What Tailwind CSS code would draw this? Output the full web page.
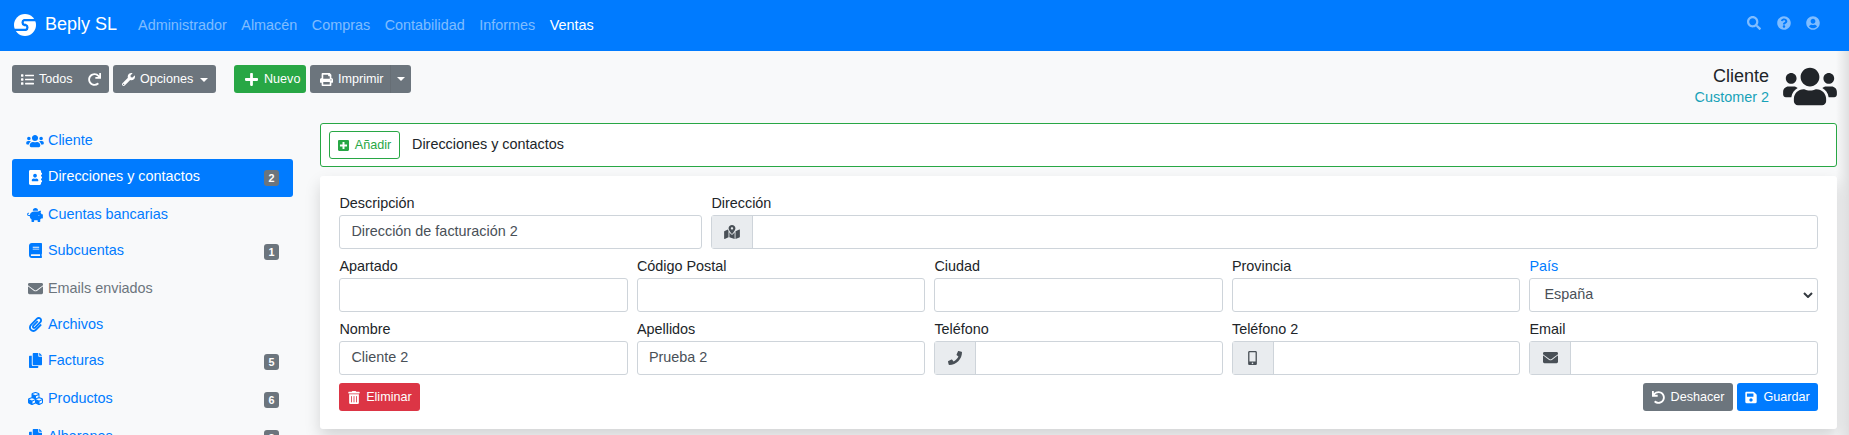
<!DOCTYPE html>
<html lang="es">
<head>
    <meta charset="UTF-8">
    <title>Cliente - Beply SL</title>
    <script src="https://cdn.jsdelivr.net/npm/@tailwindcss/browser@4"></script>
</head>
<body class="relative bg-[#f8f9fa] text-[#212529] font-['Liberation_Sans',Arial,sans-serif] text-[14.4px] leading-[21.6px] h-[435px] overflow-hidden">

    <!-- Barra superior -->
    <nav class="h-[51px] bg-[#007bff] flex items-center pl-[14px] pr-[29px]">
        <svg viewBox="0 0 24 24" class="w-[22px] h-[22px] mr-[9px] -mt-[2px]">
            <circle cx="12" cy="12" r="12" fill="#fff"/>
            <path d="M24 6.6H11.2a2.9 2.9 0 0 0 0 5.4h1.6a2.9 2.9 0 0 1 0 5.4H0" fill="none" stroke="#007bff" stroke-width="2.5"/>
        </svg>
        <span class="text-[18px] text-white mr-[21px] -mt-[2px]">Beply SL</span>
        <div class="flex gap-[14.5px] text-white/50">
            <a>Administrador</a>
            <a>Almacén</a>
            <a>Compras</a>
            <a>Contabilidad</a>
            <a>Informes</a>
            <a class="text-white">Ventas</a>
        </div>
        <div class="ml-auto flex items-center gap-[15.5px] fill-white/50 mb-[5px]">
            <svg viewBox="0 0 512 512" class="w-[14px] h-[14px]"><path d="M505 442.7L405.3 343c-4.5-4.5-10.6-7-17-7H372c27.6-35.3 44-79.7 44-128C416 93.1 322.9 0 208 0S0 93.1 0 208s93.1 208 208 208c48.3 0 92.7-16.4 128-44v16.3c0 6.4 2.5 12.5 7 17l99.7 99.7c9.4 9.4 24.6 9.4 33.9 0l28.3-28.3c9.4-9.4 9.4-24.6.1-34zM208 336c-70.7 0-128-57.2-128-128 0-70.7 57.2-128 128-128 70.7 0 128 57.2 128 128 0 70.7-57.2 128-128 128z"/></svg>
            <svg viewBox="0 0 512 512" class="w-[14px] h-[14px]"><path d="M504 256c0 136.997-111.043 248-248 248S8 392.997 8 256C8 119.083 119.043 8 256 8s248 111.083 248 248zM262.655 90c-54.497 0-89.255 22.957-116.549 63.758-3.536 5.286-2.353 12.415 2.715 16.258l34.699 26.31c5.205 3.947 12.621 3.008 16.665-2.122 17.864-22.658 30.113-35.797 57.303-35.797 20.429 0 45.698 13.148 45.698 32.958 0 14.976-12.363 22.667-32.534 33.976C247.128 238.528 216 254.941 216 296v4c0 6.627 5.373 12 12 12h56c6.627 0 12-5.373 12-12v-1.333c0-28.462 83.186-29.647 83.186-106.667 0-58.002-60.165-102-116.531-102zM256 338c-25.365 0-46 20.635-46 46 0 25.364 20.635 46 46 46s46-20.636 46-46c0-25.365-20.635-46-46-46z"/></svg>
            <svg viewBox="0 0 496 512" class="w-[14px] h-[14px]"><path d="M248 8C111 8 0 119 0 256s111 248 248 248 248-111 248-248S385 8 248 8zm0 96c48.6 0 88 39.4 88 88s-39.4 88-88 88-88-39.4-88-88 39.4-88 88-88zm0 344c-58.7 0-111.3-26.6-146.5-68.2 18.8-35.4 55.6-59.8 98.5-59.8 2.4 0 4.8.4 7.1 1.1 13 4.2 26.6 6.9 40.9 6.9 14.3 0 28-2.7 40.9-6.9 2.3-.7 4.7-1.1 7.1-1.1 42.9 0 79.7 24.4 98.5 59.8C359.3 421.4 306.7 448 248 448z"/></svg>
        </div>
    </nav>

    <!-- Barra de acciones -->
    <div class="h-[72px] flex items-start pl-[12px] pr-[12px] pt-[14px] text-[12.6px] text-white">
        <div class="flex h-[28px] w-[97px] items-center justify-between pl-[9px] pr-[8px] pt-[1px] bg-[#6c757d] rounded-[3px] mr-[4px]">
            <span class="flex items-center gap-[5px]">
                <svg viewBox="0 0 512 512" class="w-[13px] h-[13px] fill-white"><path d="M80 368H16a16 16 0 0 0-16 16v64a16 16 0 0 0 16 16h64a16 16 0 0 0 16-16v-64a16 16 0 0 0-16-16zm0-320H16A16 16 0 0 0 0 64v64a16 16 0 0 0 16 16h64a16 16 0 0 0 16-16V64a16 16 0 0 0-16-16zm0 160H16a16 16 0 0 0-16 16v64a16 16 0 0 0 16 16h64a16 16 0 0 0 16-16v-64a16 16 0 0 0-16-16zm416 176H176a16 16 0 0 0-16 16v32a16 16 0 0 0 16 16h320a16 16 0 0 0 16-16v-32a16 16 0 0 0-16-16zm0-320H176a16 16 0 0 0-16 16v32a16 16 0 0 0 16 16h320a16 16 0 0 0 16-16V80a16 16 0 0 0-16-16zm0 160H176a16 16 0 0 0-16 16v32a16 16 0 0 0 16 16h320a16 16 0 0 0 16-16v-32a16 16 0 0 0-16-16z"/></svg>
                Todos
            </span>
            <svg viewBox="0 0 512 512" class="w-[13px] h-[13px] fill-white"><path d="M500.33 0h-47.41a12 12 0 0 0-12 12.57l4 82.76A247.42 247.42 0 0 0 256 8C119.34 8 7.9 119.53 8 256.19 8.1 393.07 119.1 504 256 504a247.1 247.1 0 0 0 166.18-63.91 12 12 0 0 0 .48-17.43l-34-34a12 12 0 0 0-16.38-.55A176 176 0 1 1 402.1 157.8l-101.53-4.87a12 12 0 0 0-12.57 12v47.41a12 12 0 0 0 12 12h200.33a12 12 0 0 0 12-12V12a12 12 0 0 0-12-12z"/></svg>
        </div>
        <div class="flex h-[28px] w-[103px] items-center gap-[5px] pl-[9px] pr-[8px] pt-[1px] bg-[#6c757d] rounded-[3px] mr-[18px]">
            <svg viewBox="0 0 512 512" class="w-[13px] h-[13px] fill-white"><path d="M507.73 109.1c-2.24-9.03-13.54-12.09-20.12-5.51l-74.36 74.36-67.88-11.31-11.31-67.88 74.36-74.36c6.62-6.62 3.43-17.9-5.66-20.16-47.38-11.74-99.55.91-136.58 37.93-39.64 39.64-50.55 97.1-34.05 147.2L18.74 402.76c-24.99 24.99-24.99 65.51 0 90.5 24.99 24.99 65.51 24.99 90.5 0l213.21-213.21c50.12 16.71 107.47 5.68 147.37-34.22 37.07-37.07 49.7-89.32 37.91-136.73zM64 472c-13.25 0-24-10.75-24-24 0-13.26 10.75-24 24-24s24 10.74 24 24c0 13.25-10.75 24-24 24z"/></svg>
            Opciones
            <span class="ml-auto border-x-[4px] border-t-[4px] border-x-transparent border-t-white"></span>
        </div>
        <div class="flex h-[28px] w-[72px] items-center gap-[6px] pl-[11px] pt-[1px] bg-[#28a745] rounded-[3px] mr-[4px]">
            <svg viewBox="0 0 448 512" class="w-[13px] h-[15px] fill-white"><path d="M416 208H272V64c0-17.67-14.33-32-32-32h-32c-17.67 0-32 14.33-32 32v144H32c-17.67 0-32 14.33-32 32v32c0 17.67 14.33 32 32 32h144v144c0 17.67 14.33 32 32 32h32c17.67 0 32-14.33 32-32V304h144c17.67 0 32-14.33 32-32v-32c0-17.67-14.33-32-32-32z"/></svg>
            Nuevo
        </div>
        <div class="flex h-[28px] w-[101px] items-center bg-[#6c757d] rounded-[3px]">
            <div class="flex flex-1 h-full items-center gap-[5px] pl-[10px] pt-[1px] border-r border-[#666e75]">
                <svg viewBox="0 0 512 512" class="w-[13px] h-[13px] fill-white"><path d="M448 192V77.25c0-8.49-3.37-16.62-9.37-22.63L393.37 9.37c-6-6-14.14-9.37-22.63-9.37H96C78.33 0 64 14.33 64 32v160c-35.35 0-64 28.65-64 64v112c0 8.84 7.16 16 16 16h48v96c0 17.67 14.33 32 32 32h320c17.67 0 32-14.33 32-32v-96h48c8.84 0 16-7.16 16-16V256c0-35.35-28.65-64-64-64zm-64 256H128v-96h256v96zm0-224H128V64h192v48c0 8.84 7.16 16 16 16h48v96zm48 72c-13.25 0-24-10.75-24-24 0-13.26 10.75-24 24-24s24 10.74 24 24c0 13.25-10.75 24-24 24z"/></svg>
                Imprimir
            </div>
            <div class="w-[20px] flex justify-center">
                <span class="border-x-[4px] border-t-[4px] border-x-transparent border-t-white"></span>
            </div>
        </div>
        <div class="ml-auto flex items-start">
            <div class="text-right mr-[14px] pt-[1px]">
                <div class="text-[18px] leading-[21px] text-[#212529]">Cliente</div>
                <div class="text-[14.4px] leading-[21.6px] text-[#17a2b8]">Customer 2</div>
            </div>
            <svg viewBox="0 0 640 512" class="w-[54px] h-[43px] fill-[#212529]"><path d="M96 224c35.3 0 64-28.7 64-64s-28.7-64-64-64-64 28.7-64 64 28.7 64 64 64zm448 0c35.3 0 64-28.7 64-64s-28.7-64-64-64-64 28.7-64 64 28.7 64 64 64zm32 32h-64c-17.6 0-33.5 7.1-45.1 18.6 40.3 22.1 68.9 62 75.1 109.4h66c17.7 0 32-14.3 32-32v-32c0-35.3-28.7-64-64-64zm-256 0c61.9 0 112-50.1 112-112S381.9 32 320 32 208 82.1 208 144s50.1 112 112 112zm76.8 32h-8.3c-20.8 10-43.9 16-68.5 16s-47.6-6-68.5-16h-8.3C179.6 288 128 339.6 128 403.2V432c0 26.5 21.5 48 48 48h288c26.5 0 48-21.5 48-48v-28.8c0-63.6-51.6-115.2-115.2-115.2zm-223.7-13.4C161.5 263.1 145.6 256 128 256H64c-35.3 0-64 28.7-64 64v32c0 17.7 14.3 32 32 32h65.9c6.3-47.4 34.9-87.3 75.2-109.4z"/></svg>
        </div>
    </div>

    <div class="flex pl-[12px] pr-[12px] h-[312px] overflow-hidden">
        <!-- Menú lateral -->
        <aside class="w-[281px] shrink-0 mr-[27px] text-[#007bff] fill-[#007bff]">
            <a class="flex items-center h-[36px] pl-[14px] pr-[14px] gap-[4px]">
                <svg viewBox="0 0 640 512" class="w-[18px] h-[14px]"><path d="M96 224c35.3 0 64-28.7 64-64s-28.7-64-64-64-64 28.7-64 64 28.7 64 64 64zm448 0c35.3 0 64-28.7 64-64s-28.7-64-64-64-64 28.7-64 64 28.7 64 64 64zm32 32h-64c-17.6 0-33.5 7.1-45.1 18.6 40.3 22.1 68.9 62 75.1 109.4h66c17.7 0 32-14.3 32-32v-32c0-35.3-28.7-64-64-64zm-256 0c61.9 0 112-50.1 112-112S381.9 32 320 32 208 82.1 208 144s50.1 112 112 112zm76.8 32h-8.3c-20.8 10-43.9 16-68.5 16s-47.6-6-68.5-16h-8.3C179.6 288 128 339.6 128 403.2V432c0 26.5 21.5 48 48 48h288c26.5 0 48-21.5 48-48v-28.8c0-63.6-51.6-115.2-115.2-115.2zm-223.7-13.4C161.5 263.1 145.6 256 128 256H64c-35.3 0-64 28.7-64 64v32c0 17.7 14.3 32 32 32h65.9c6.3-47.4 34.9-87.3 75.2-109.4z"/></svg>
                Cliente
            </a>
            <a class="flex items-center h-[38px] pl-[14px] pr-[14px] gap-[4px] bg-[#007bff] text-white fill-white rounded-[3px]">
                <span class="w-[18px] flex justify-center -mt-[2px]"><svg viewBox="0 0 448 512" class="w-[13px] h-[15px]"><path d="M436 160c6.6 0 12-5.4 12-12v-40c0-6.6-5.4-12-12-12h-20V48c0-26.5-21.5-48-48-48H48C21.5 0 0 21.5 0 48v416c0 26.5 21.5 48 48 48h320c26.5 0 48-21.5 48-48v-48h20c6.6 0 12-5.4 12-12v-40c0-6.6-5.4-12-12-12h-20v-64h20c6.6 0 12-5.4 12-12v-40c0-6.6-5.4-12-12-12h-20v-64h20zm-228-32c35.3 0 64 28.7 64 64s-28.7 64-64 64-64-28.7-64-64 28.7-64 64-64zm112 236.8c0 10.6-10 19.2-22.4 19.2H118.4C106 384 96 375.4 96 364.8v-19.2c0-31.8 30.1-57.6 67.2-57.6h5c12.3 5.1 25.7 8 39.8 8s27.6-2.9 39.8-8h5c37.1 0 67.2 25.8 67.2 57.6v19.2z"/></svg></span>
                <span class="-mt-[2px]">Direcciones y contactos</span>
                <span class="ml-auto w-[15px] h-[16px] rounded-[3px] bg-[#6c757d] text-white text-[10.8px] leading-[16px] font-bold text-center">2</span>
            </a>
            <a class="flex items-center h-[35.6px] pl-[14px] pr-[14px] gap-[4px]">
                <span class="w-[18px] flex justify-center"><svg viewBox="0 0 576 512" class="w-[16px] h-[14px]"><path d="M560 224h-29.5c-8.8-20-21.6-37.7-37.4-52.5L512 96h-32c-29.4 0-55.4 13.5-73 34.3-7.6-1.1-15.1-2.3-23-2.3H256c-77.4 0-141.9 55-156.8 128H56c-14.8 0-26.5-13.5-23.5-28.8C34.7 215.8 45.4 208 57 208h1c3.3 0 6-2.7 6-6v-20c0-3.3-2.7-6-6-6-28.5 0-53.9 20.4-57.5 48.6C-3.9 258.8 22.7 288 56 288h40c0 52.2 25.4 98.1 64 127.3V496c0 8.8 7.2 16 16 16h64c8.8 0 16-7.2 16-16v-48h128v48c0 8.8 7.2 16 16 16h64c8.8 0 16-7.2 16-16v-80.9c11.8-8.9 22.3-19.4 31.3-31.1H560c8.8 0 16-7.2 16-16V240c0-8.8-7.2-16-16-16zm-128 64c-8.8 0-16-7.2-16-16s7.2-16 16-16 16 7.2 16 16-7.2 16-16 16zM256 96h128c5.4 0 10.7.4 15.9.8 0-.3.1-.5.1-.8 0-53-43-96-96-96s-96 43-96 96c0 2.1.5 4.1.6 6.2 15.2-3.9 31-6.2 47.4-6.2z"/></svg></span>
                Cuentas bancarias
            </a>
            <a class="flex items-center h-[38px] pl-[14px] pr-[14px] gap-[4px]">
                <span class="w-[18px] flex justify-center -mt-[2px]"><svg viewBox="0 0 448 512" class="w-[13px] h-[15px]"><path d="M448 360V24c0-13.3-10.7-24-24-24H96C43 0 0 43 0 96v320c0 53 43 96 96 96h328c13.3 0 24-10.7 24-24v-16c0-7.5-3.5-14.3-8.9-18.7-4.2-15.4-4.2-59.3 0-74.7 5.4-4.3 8.9-11.1 8.9-18.6zM128 134c0-3.3 2.7-6 6-6h212c3.3 0 6 2.7 6 6v20c0 3.3-2.7 6-6 6H134c-3.3 0-6-2.7-6-6v-20zm0 64c0-3.3 2.7-6 6-6h212c3.3 0 6 2.7 6 6v20c0 3.3-2.7 6-6 6H134c-3.3 0-6-2.7-6-6v-20zm253.4 250H96c-17.7 0-32-14.3-32-32 0-17.6 14.4-32 32-32h285.4c-1.9 17.1-1.9 46.9 0 64z"/></svg></span>
                <span class="-mt-[2px]">Subcuentas</span>
                <span class="ml-auto w-[15px] h-[16px] rounded-[3px] bg-[#6c757d] text-white text-[10.8px] leading-[16px] font-bold text-center">1</span>
            </a>
            <a class="flex items-center h-[36px] pl-[14px] pr-[14px] gap-[4px] text-[#6c757d] fill-[#6c757d]">
                <svg viewBox="0 0 512 512" class="w-[15px] h-[15px] mx-[1.5px]"><path d="M502.3 190.8c3.9-3.1 9.7-.2 9.7 4.7V400c0 26.5-21.5 48-48 48H48c-26.5 0-48-21.5-48-48V195.6c0-5 5.7-7.8 9.7-4.7 22.4 17.4 52.1 39.5 154.1 113.6 21.1 15.4 56.7 47.8 92.2 47.6 35.7.3 72-32.8 92.3-47.6 102-74.1 131.6-96.3 154-113.7zM256 320c23.2.4 56.6-29.2 73.4-41.4 132.7-96.3 142.8-104.7 173.4-128.7 5.8-4.5 9.2-11.5 9.2-18.9v-19c0-26.5-21.5-48-48-48H48C21.5 64 0 85.5 0 112v19c0 7.4 3.4 14.3 9.2 18.9 30.6 23.9 40.7 32.4 173.4 128.7 16.8 12.2 50.2 41.8 73.4 41.4z"/></svg>
                Emails enviados
            </a>
            <a class="flex items-center h-[36px] pl-[14px] pr-[14px] gap-[4px]">
                <span class="w-[18px] flex justify-center"><svg viewBox="0 0 448 512" class="w-[13px] h-[15px]"><path d="M43.246 466.142c-58.43-60.289-57.341-157.511 1.386-217.581L254.392 34c44.316-45.332 116.351-45.336 160.671 0 43.89 44.894 43.943 117.329 0 162.276L232.214 383.128c-29.855 30.537-78.633 30.111-107.982-.998-28.275-29.97-27.368-77.473 1.452-106.953l143.743-146.835c6.182-6.314 16.312-6.422 22.626-.241l22.861 22.379c6.315 6.182 6.422 16.312.241 22.626L171.427 319.927c-4.932 5.045-5.236 13.428-.648 18.292 4.372 4.634 11.245 4.711 15.688.165l182.849-186.851c19.613-20.062 19.613-52.725-.011-72.798-19.189-19.627-49.957-19.637-69.154 0L90.39 293.295c-34.763 35.56-35.299 93.12-1.191 128.313 34.01 35.093 88.985 35.137 123.058.286l172.06-175.999c6.177-6.319 16.307-6.433 22.626-.256l22.877 22.364c6.319 6.177 6.434 16.307.256 22.626l-172.06 175.998c-59.576 60.938-155.943 60.216-214.77-.485z"/></svg></span>
                Archivos
            </a>
            <a class="flex items-center h-[38px] pl-[14px] pr-[14px] gap-[4px]">
                <span class="w-[18px] flex justify-center -mt-[2px]"><svg viewBox="0 0 448 512" class="w-[13px] h-[15px]"><path d="M320 448v40c0 13.255-10.745 24-24 24H24c-13.255 0-24-10.745-24-24V120c0-13.255 10.745-24 24-24h72v296c0 30.879 25.121 56 56 56h168zm0-344V0H152c-13.255 0-24 10.745-24 24v368c0 13.255 10.745 24 24 24h272c13.255 0 24-10.745 24-24V128H344c-13.2 0-24-10.8-24-24zm120.971-31.029L375.029 7.029A24 24 0 0 0 358.059 0H352v96h96v-6.059a24 24 0 0 0-7.029-16.97z"/></svg></span>
                <span class="-mt-[2px]">Facturas</span>
                <span class="ml-auto w-[15px] h-[16px] rounded-[3px] bg-[#6c757d] text-white text-[10.8px] leading-[16px] font-bold text-center">5</span>
            </a>
            <a class="flex items-center h-[38px] pl-[14px] pr-[14px] gap-[4px]">
                <span class="w-[18px] flex justify-center -mt-[2px]"><svg viewBox="0 0 512 512" class="w-[15px] h-[15px]"><path d="M488.6 250.2L392 214V105.5c0-15-9.3-28.4-23.4-33.7l-100-37.5c-8.1-3.1-17.1-3.1-25.3 0l-100 37.5c-14.1 5.3-23.4 18.7-23.4 33.7V214l-96.6 36.2C9.3 255.5 0 268.9 0 283.9V394c0 13.6 7.7 26.1 19.9 32.2l100 50c10.1 5.1 22.1 5.1 32.2 0l103.9-52 103.9 52c10.1 5.1 22.1 5.1 32.2 0l100-50c12.2-6.1 19.9-18.6 19.9-32.2V283.9c0-15-9.3-28.4-23.4-33.7zM358 214.8l-85 31.9v-68.2l85-37v73.3zM154 104.1l102-38.2 102 38.2v.6l-102 41.4-102-41.4v-.6zm84 291.1l-85 42.5v-79.1l85-38.8v75.4zm0-112l-102 41.4-102-41.4v-.6l102-38.2 102 38.2v.6zm240 112l-85 42.5v-79.1l85-38.8v75.4zm0-112l-102 41.4-102-41.4v-.6l102-38.2 102 38.2v.6z"/></svg></span>
                <span class="-mt-[2px]">Productos</span>
                <span class="ml-auto w-[15px] h-[16px] rounded-[3px] bg-[#6c757d] text-white text-[10.8px] leading-[16px] font-bold text-center">6</span>
            </a>
            <a class="flex items-center h-[38px] pl-[14px] pr-[14px] gap-[4px]">
                <span class="w-[18px] flex justify-center -mt-[2px]"><svg viewBox="0 0 448 512" class="w-[13px] h-[15px]"><path d="M320 448v40c0 13.255-10.745 24-24 24H24c-13.255 0-24-10.745-24-24V120c0-13.255 10.745-24 24-24h72v296c0 30.879 25.121 56 56 56h168zm0-344V0H152c-13.255 0-24 10.745-24 24v368c0 13.255 10.745 24 24 24h272c13.255 0 24-10.745 24-24V128H344c-13.2 0-24-10.8-24-24zm120.971-31.029L375.029 7.029A24 24 0 0 0 358.059 0H352v96h96v-6.059a24 24 0 0 0-7.029-16.97z"/></svg></span>
                <span class="-mt-[2px]">Albaranes</span>
                <span class="ml-auto w-[15px] h-[16px] rounded-[3px] bg-[#6c757d] text-white text-[10.8px] leading-[16px] font-bold text-center">3</span>
            </a>
        </aside>

        <!-- Contenido -->
        <main class="w-[1517px] shrink-0">
            <div class="h-[44px] flex items-center bg-white border border-[#28a745] rounded-[3px] pl-[8px] mb-[9px]">
                <div class="flex items-center h-[28px] w-[71px] justify-center gap-[6px] pt-[1px] border border-[#28a745] rounded-[3px] text-[#28a745] text-[12.6px] mr-[12px]">
                    <svg viewBox="0 0 448 512" class="w-[11px] h-[13px] fill-[#28a745]"><path d="M400 32H48C21.5 32 0 53.5 0 80v352c0 26.5 21.5 48 48 48h352c26.5 0 48-21.5 48-48V80c0-26.5-21.5-48-48-48zm-32 252c0 6.6-5.4 12-12 12h-92v92c0 6.6-5.4 12-12 12h-56c-6.6 0-12-5.4-12-12v-92H92c-6.6 0-12-5.4-12-12v-56c0-6.6 5.4-12 12-12h92v-92c0-6.6 5.4-12 12-12h56c6.6 0 12 5.4 12 12v92h92c6.6 0 12 5.4 12 12v56z"/></svg>
                    Añadir
                </div>
                <span>Direcciones y contactos</span>
            </div>

            <form class="bg-white rounded-[3px] shadow-[0_8px_16px_rgba(0,0,0,0.15)] pt-[17.4px] pl-[19.4px] pr-[19px] h-[253px]">
                <div class="grid grid-cols-[363px_1fr] gap-x-[9px] mb-[7.4px]">
                    <label>Descripción
                        <div class="h-[34px] flex items-center px-[11px] border border-[#ced4da] rounded-[3px] text-[#495057]">Dirección de facturación 2</div>
                    </label>
                    <label>Dirección
                        <div class="h-[34px] flex border border-[#ced4da] rounded-[3px]">
                            <span class="w-[41px] flex items-center justify-center bg-[#e9ecef] border-r border-[#ced4da] fill-[#495057]">
                                <svg viewBox="0 0 576 512" class="w-[16px] h-[14px]"><path d="M288 0c-69.59 0-126 56.41-126 126 0 56.26 82.35 158.8 113.9 196.02 6.39 7.54 17.82 7.54 24.2 0C331.65 284.8 414 182.26 414 126 414 56.41 357.59 0 288 0zm0 168c-23.2 0-42-18.8-42-42s18.8-42 42-42 42 18.8 42 42-18.8 42-42 42zM20.12 215.95A32.006 32.006 0 0 0 0 245.66v250.32c0 11.32 11.43 19.06 21.94 14.86L160 448V214.92c-8.84-15.98-16.07-31.54-21.25-46.42L20.12 215.95zM288 359.67c-14.07 0-27.38-6.18-36.51-16.96-19.66-23.2-40.57-49.62-59.49-76.72V448l192 64V266c-18.92 27.09-39.82 53.52-59.49 76.72-9.13 10.77-22.44 16.95-36.51 16.95zm266.06-198.51L416 224v288l139.88-55.95A31.996 31.996 0 0 0 576 426.34V176.02c0-11.32-11.43-19.06-21.94-14.86z"/></svg>
                            </span>
                        </div>
                    </label>
                </div>

                <div class="grid grid-cols-5 gap-x-[9px] mb-[7.4px]">
                    <label>Apartado<div class="h-[34px] border border-[#ced4da] rounded-[3px]"></div></label>
                    <label>Código Postal<div class="h-[34px] border border-[#ced4da] rounded-[3px]"></div></label>
                    <label>Ciudad<div class="h-[34px] border border-[#ced4da] rounded-[3px]"></div></label>
                    <label>Provincia<div class="h-[34px] border border-[#ced4da] rounded-[3px]"></div></label>
                    <label class="text-[#007bff]">País
                        <div class="h-[34px] flex items-center justify-between pl-[14px] pr-[4px] border border-[#ced4da] rounded-[3px] text-[#495057]">
                            España
                            <svg viewBox="0 0 10 6" class="w-[10px] h-[6px]"><path d="M1 1l4 4 4-4" fill="none" stroke="#343a40" stroke-width="2"/></svg>
                        </div>
                    </label>
                </div>

                <div class="grid grid-cols-5 gap-x-[9px] mb-[8px]">
                    <label>Nombre
                        <div class="h-[34px] flex items-center px-[11px] border border-[#ced4da] rounded-[3px] text-[#495057]">Cliente 2</div>
                    </label>
                    <label>Apellidos
                        <div class="h-[34px] flex items-center px-[11px] border border-[#ced4da] rounded-[3px] text-[#495057]">Prueba 2</div>
                    </label>
                    <label>Teléfono
                        <div class="h-[34px] flex border border-[#ced4da] rounded-[3px]">
                            <span class="w-[41px] flex items-center justify-center bg-[#e9ecef] border-r border-[#ced4da] fill-[#495057]">
                                <svg viewBox="0 0 512 512" class="w-[14px] h-[14px]"><path d="M493.4 24.6l-104-24c-11.3-2.6-22.9 3.3-27.5 13.9l-48 112c-4.2 9.8-1.4 21.3 6.9 28l60.6 49.6c-36 76.7-98.9 140.5-177.2 177.2l-49.6-60.6c-6.8-8.3-18.2-11.1-28-6.9l-112 48C3.9 366.5-2 378.1.6 389.4l24 104C27.1 504.2 36.7 512 48 512c256.1 0 464-207.5 464-464 0-11.2-7.7-20.9-18.6-23.4z"/></svg>
                            </span>
                        </div>
                    </label>
                    <label>Teléfono 2
                        <div class="h-[34px] flex border border-[#ced4da] rounded-[3px]">
                            <span class="w-[41px] flex items-center justify-center bg-[#e9ecef] border-r border-[#ced4da] fill-[#495057]">
                                <svg viewBox="0 0 320 512" class="w-[9px] h-[14px]"><path d="M272 0H48C21.5 0 0 21.5 0 48v416c0 26.5 21.5 48 48 48h224c26.5 0 48-21.5 48-48V48c0-26.5-21.5-48-48-48zM160 480c-17.7 0-32-14.3-32-32s14.3-32 32-32 32 14.3 32 32-14.3 32-32 32zm112-108c0 6.6-5.4 12-12 12H60c-6.6 0-12-5.4-12-12V60c0-6.6 5.4-12 12-12h200c6.6 0 12 5.4 12 12v312z"/></svg>
                            </span>
                        </div>
                    </label>
                    <label>Email
                        <div class="h-[34px] flex border border-[#ced4da] rounded-[3px]">
                            <span class="w-[41px] flex items-center justify-center bg-[#e9ecef] border-r border-[#ced4da] fill-[#495057]">
                                <svg viewBox="0 0 512 512" class="w-[15px] h-[15px]"><path d="M502.3 190.8c3.9-3.1 9.7-.2 9.7 4.7V400c0 26.5-21.5 48-48 48H48c-26.5 0-48-21.5-48-48V195.6c0-5 5.7-7.8 9.7-4.7 22.4 17.4 52.1 39.5 154.1 113.6 21.1 15.4 56.7 47.8 92.2 47.6 35.7.3 72-32.8 92.3-47.6 102-74.1 131.6-96.3 154-113.7zM256 320c23.2.4 56.6-29.2 73.4-41.4 132.7-96.3 142.8-104.7 173.4-128.7 5.8-4.5 9.2-11.5 9.2-18.9v-19c0-26.5-21.5-48-48-48H48C21.5 64 0 85.5 0 112v19c0 7.4 3.4 14.3 9.2 18.9 30.6 23.9 40.7 32.4 173.4 128.7 16.8 12.2 50.2 41.8 73.4 41.4z"/></svg>
                            </span>
                        </div>
                    </label>
                </div>

                <div class="flex text-[12.6px] text-white">
                    <div class="flex h-[28px] w-[81px] items-center justify-center gap-[6px] pt-[1px] bg-[#dc3545] rounded-[3px]">
                        <svg viewBox="0 0 448 512" class="w-[12px] h-[13px] fill-white"><path d="M32 464a48 48 0 0 0 48 48h288a48 48 0 0 0 48-48V128H32zm272-256a16 16 0 0 1 32 0v224a16 16 0 0 1-32 0zm-96 0a16 16 0 0 1 32 0v224a16 16 0 0 1-32 0zm-96 0a16 16 0 0 1 32 0v224a16 16 0 0 1-32 0zM432 32H312l-9.4-18.7A24 24 0 0 0 281.1 0H166.8a23.72 23.72 0 0 0-21.4 13.3L136 32H16A16 16 0 0 0 0 48v32a16 16 0 0 0 16 16h416a16 16 0 0 0 16-16V48a16 16 0 0 0-16-16z"/></svg>
                        Eliminar
                    </div>
                    <div class="ml-auto flex h-[28px] w-[90px] items-center justify-center gap-[6px] pt-[1px] bg-[#6c757d] rounded-[3px] mr-[4px]">
                        <svg viewBox="0 0 512 512" class="w-[13px] h-[13px] fill-white"><path d="M212.333 224.333H12c-6.627 0-12-5.373-12-12V12C0 5.373 5.373 0 12 0h48c6.627 0 12 5.373 12 12v78.112C117.773 39.279 184.26 7.47 258.175 8.007c136.906.994 246.448 111.623 246.157 248.532C504.041 393.258 393.12 504 256.333 504c-64.089 0-122.496-24.313-166.51-64.215-5.099-4.622-5.334-12.554-.467-17.42l33.967-33.967c4.474-4.474 11.662-4.717 16.401-.525C170.76 415.336 211.58 432 256.333 432c97.268 0 176-78.716 176-176 0-97.267-78.716-176-176-176-58.496 0-110.28 28.476-142.274 72.333h98.274c6.627 0 12 5.373 12 12v48c0 6.627-5.373 12-12 12z"/></svg>
                        Deshacer
                    </div>
                    <div class="flex h-[28px] w-[81px] items-center justify-center gap-[6px] pt-[1px] bg-[#007bff] rounded-[3px]">
                        <svg viewBox="0 0 448 512" class="w-[12px] h-[13px] fill-white"><path d="M433.941 129.941l-83.882-83.882A48 48 0 0 0 316.118 32H48C21.49 32 0 53.49 0 80v352c0 26.51 21.49 48 48 48h352c26.51 0 48-21.49 48-48V163.882a48 48 0 0 0-14.059-33.941zM224 416c-35.346 0-64-28.654-64-64 0-35.346 28.654-64 64-64s64 28.654 64 64c0 35.346-28.654 64-64 64zm96-304.52V212c0 6.627-5.373 12-12 12H76c-6.627 0-12-5.373-12-12V108c0-6.627 5.373-12 12-12h228.52c3.183 0 6.235 1.264 8.485 3.515l3.48 3.48A11.996 11.996 0 0 1 320 111.48z"/></svg>
                        Guardar
                    </div>
                </div>
            </form>
        </main>
    </div>

    <!-- Sombra del borde derecho -->
    <div class="absolute top-[51px] bottom-0 right-0 w-[13px] bg-linear-to-r from-transparent to-black/10"></div>
</body>
</html>
